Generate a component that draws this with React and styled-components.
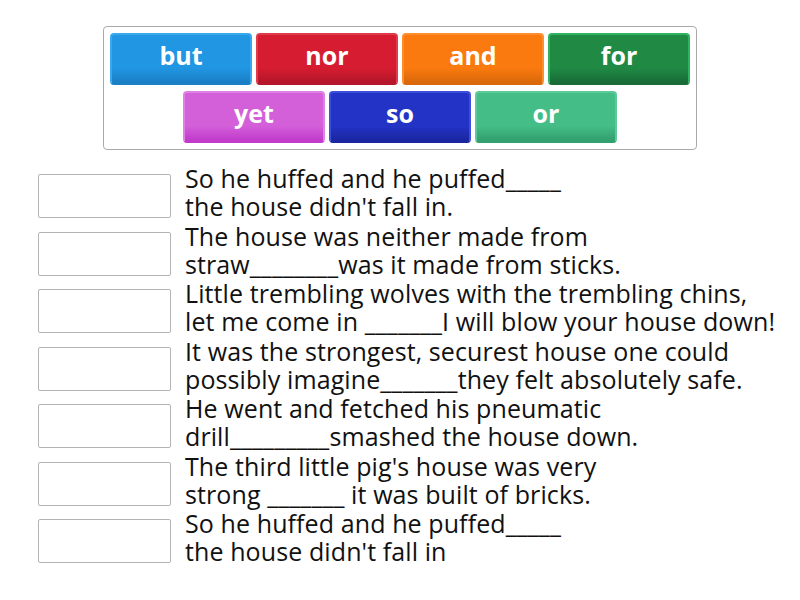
import React from "react";
import styled, { createGlobalStyle } from "styled-components";

const Global = createGlobalStyle`
  html, body { margin: 0; padding: 0; background: #fff; }
  body { font-family: "Open Sans", "Noto Sans", sans-serif; color: #111; }
`;

const Page = styled.div`
  width: 800px;
  padding-top: 26px;
  display: flex;
  flex-direction: column;
  align-items: center;
`;

const Bank = styled.div`
  box-sizing: border-box;
  width: 594px;
  height: 124px;
  border: 1px solid #a9a9a9;
  border-radius: 4px;
  padding: 6px 6px;
  display: flex;
  flex-direction: column;
  align-items: center;
  gap: 6px;
`;

const TileRow = styled.div`
  display: flex;
  gap: 4px;
`;

const Tile = styled.div`
  box-sizing: border-box;
  width: 142px;
  height: 52px;
  border-radius: 4px;
  border: 2px solid ${(p) => p.$rim};
  border-bottom: 3px solid ${(p) => p.$dark};
  background: linear-gradient(${(p) => p.$face}, ${(p) => p.$face} 70%, ${(p) => p.$dark});
  color: #fff;
  font-weight: 700;
  font-size: 25px;
  display: flex;
  align-items: center;
  justify-content: center;
  padding-bottom: 7px;
`;

const List = styled.div`
  margin-top: 22px;
  width: 800px;
  padding-left: 38px;
  box-sizing: border-box;
  display: flex;
  flex-direction: column;
`;

const Row = styled.div`
  height: 57.5px;
  display: flex;
  align-items: flex-start;
  gap: 14px;
`;

const Slot = styled.div`
  box-sizing: border-box;
  width: 133px;
  height: 44px;
  margin-top: 2px;
  border: 1px solid #b4b4b4;
  border-radius: 2px;
  background: #fff;
  flex: none;
`;

const Sentence = styled.div`
  font-size: 25px;
  letter-spacing: 0.1px;
  line-height: 28px;
  color: #111;
  white-space: pre;
  margin-top: -8px;
`;

const tiles1 = [
  { t: "but", face: "#2196e3", rim: "#3aa8ee", dark: "#1a7fc5" },
  { t: "nor", face: "#d61c30", rim: "#e13a4b", dark: "#b5162a" },
  { t: "and", face: "#fb7a0f", rim: "#ff8f2e", dark: "#d9690a" },
  { t: "for", face: "#208a45", rim: "#2fb35f", dark: "#196c37" },
];
const tiles2 = [
  { t: "yet", face: "#d35fd9", rim: "#de82e4", dark: "#c13ccb" },
  { t: "so", face: "#2333c6", rim: "#3b4edc", dark: "#1b27a0" },
  { t: "or", face: "#44bd87", rim: "#5ccb99", dark: "#33a06f" },
];

const sentences = [
  "So he huffed and he puffed_____\nthe house didn't fall in.",
  "The house was neither made from\nstraw________was it made from sticks.",
  "Little trembling wolves with the trembling chins,\nlet me come in _______I will blow your house down!",
  "It was the strongest, securest house one could\npossibly imagine_______they felt absolutely safe.",
  "He went and fetched his pneumatic\ndrill_________smashed the house down.",
  "The third little pig's house was very\nstrong _______ it was built of bricks.",
  "So he huffed and he puffed_____\nthe house didn't fall in",
];

export default function App() {
  return (
    <>
      <Global />
      <Page>
        <Bank>
          <TileRow>
            {tiles1.map((x) => (
              <Tile key={x.t} $face={x.face} $rim={x.rim} $dark={x.dark}>{x.t}</Tile>
            ))}
          </TileRow>
          <TileRow>
            {tiles2.map((x) => (
              <Tile key={x.t} $face={x.face} $rim={x.rim} $dark={x.dark}>{x.t}</Tile>
            ))}
          </TileRow>
        </Bank>
        <List>
          {sentences.map((s, i) => (
            <Row key={i}>
              <Slot />
              <Sentence>{s}</Sentence>
            </Row>
          ))}
        </List>
      </Page>
    </>
  );
}
